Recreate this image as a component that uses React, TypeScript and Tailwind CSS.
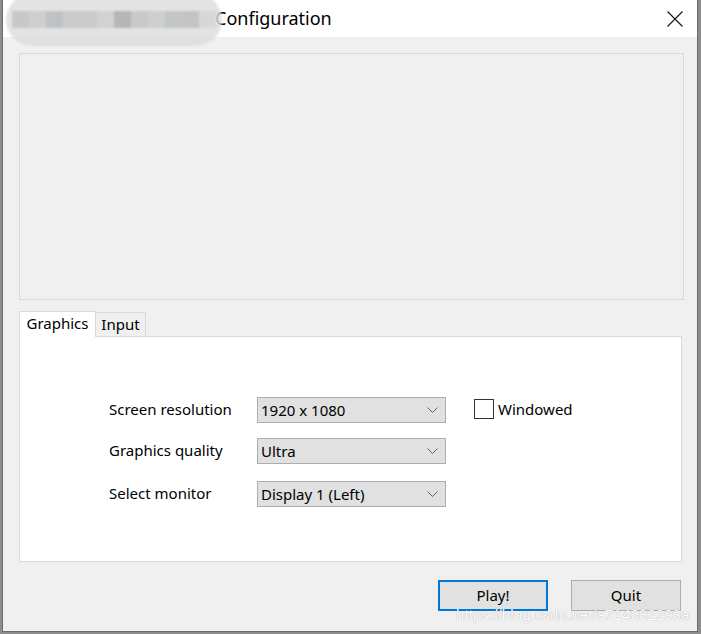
const font = { fontFamily: '"Noto Sans", "Open Sans", sans-serif' };

function Select({ value }: { value: string }) {
  return (
    <div className="flex h-[26px] w-[189px] items-center justify-between border border-[#adadad] bg-[#e1e1e1] pl-[3px] pr-[7px] text-[15px] text-black">
      <span>{value}</span>
      <svg width="11" height="6" viewBox="0 0 11 6" fill="none" stroke="#606060" strokeWidth="1">
        <path d="M0.5 0.5 L5.5 5.5 L10.5 0.5" />
      </svg>
    </div>
  );
}

function Row({ label, value, extra }: { label: string; value: string; extra?: React.ReactNode }) {
  return (
    <div className="flex items-start">
      <div className="w-[148px] pt-[1px] text-[15px] text-black">{label}</div>
      <Select value={value} />
      {extra}
    </div>
  );
}

export default function App() {
  return (
    <div className="h-[634px] w-[701px] overflow-hidden bg-[#8d8d8d]" style={font}>
      <div className="ml-[2px] flex h-[632px] w-[696px] flex-col border-x border-b border-[#6b6b6b] bg-[#f0f0f0]">
        {/* title bar */}
        <div className="relative flex h-[37px] shrink-0 items-center bg-white">
          <div className="absolute left-[3px] top-[-6px] h-[52px] w-[216px] rounded-[26px] bg-[#dcdcdc]/80 blur-[1px]">
            <div className="mt-[17px] ml-[6px] flex h-[17px]">
              {["#c8c8c6", "#cfcfcd", "#bfc2c4", "#cbcbca", "#c9cbcb", "#d2d2d2", "#b7b6b4", "#c8c9ca", "#cfcfcf", "#c3c6c6", "#c5c4c2", "#d6d7d9"].map((c, i) => (
                <div key={i} className="h-full w-[17px]" style={{ backgroundColor: c }} />
              ))}
            </div>
          </div>
          <span className="ml-[212px] text-[18px] text-black">Configuration</span>
          <svg className="absolute left-[664px] top-[11px]" width="16" height="16" viewBox="0 0 16 16" stroke="#111" strokeWidth="1.1">
            <path d="M0.5 0.5 L15.5 15.5 M15.5 0.5 L0.5 15.5" />
          </svg>
        </div>

        {/* preview area */}
        <div className="ml-[16px] mt-[16px] h-[247px] w-[665px] shrink-0 border border-[#d9d9d9] bg-[#f0f0f0]" />

        {/* tabs */}
        <div className="ml-[16px] mt-[11px] flex items-end">
          <div className="relative z-10 -mb-px flex h-[26px] w-[77px] items-center justify-center border border-b-0 border-[#d9d9d9] bg-white pb-[3px] text-[15px] text-black">
            Graphics
          </div>
          <div className="flex h-[24px] w-[50px] items-center justify-center border border-l-0 border-b-0 border-[#d9d9d9] bg-[#f0f0f0] text-[15px] text-black">
            Input
          </div>
        </div>
        <div className="ml-[16px] h-[226px] w-[663px] border border-[#d9d9d9] bg-white pl-[89px] pt-[60px]">
          <div className="flex flex-col">
            <Row
              label="Screen resolution"
              value="1920 x 1080"
              extra={
                <div className="ml-[28px] flex items-center gap-[4px] pt-[1px]">
                  <div className="h-[20px] w-[20px] border border-[#333] bg-white" />
                  <span className="text-[15px] text-black">Windowed</span>
                </div>
              }
            />
            <div className="mt-[15px]">
              <Row label="Graphics quality" value="Ultra" />
            </div>
            <div className="mt-[17px]">
              <Row label="Select monitor" value="Display 1 (Left)" />
            </div>
          </div>
        </div>

        {/* buttons */}
        <div className="relative ml-[435px] mt-[18px] flex gap-[23px]">
          <button className="h-[31px] w-[110px] border-2 border-[#0078d7] bg-[#e1e1e1] text-[15px] text-black">
            Play!
          </button>
          <button className="h-[31px] w-[110px] border border-[#adadad] bg-[#e1e1e1] text-[15px] text-black">
            Quit
          </button>
          <span
            className="absolute left-[18px] top-[24px] text-[15px] tracking-[0.1px] text-white"
            style={{ fontFamily: '"Liberation Sans", Arial, sans-serif', textShadow: "0 0 1px rgba(0,0,0,0.4)" }}
          >
            https://blog.csdn.net/a714682293a
          </span>
        </div>
      </div>
    </div>
  );
}
